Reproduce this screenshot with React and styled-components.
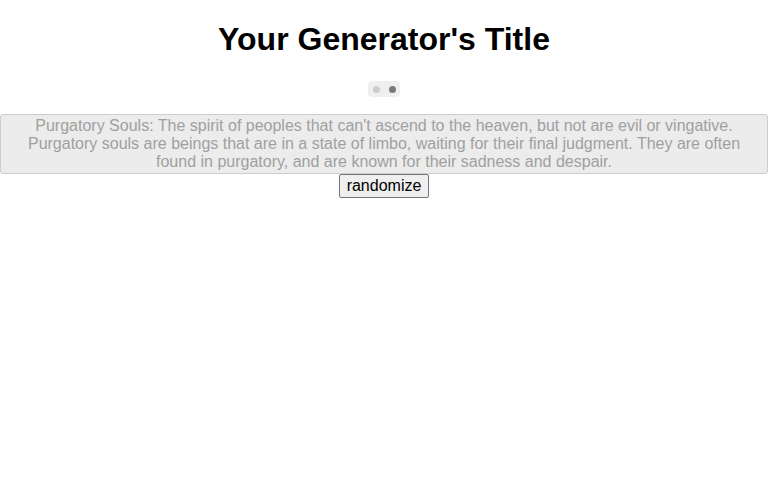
import React, { useState } from 'react';
import styled, { createGlobalStyle } from 'styled-components';

const descriptions = [
  "Purgatory Souls: The spirit of peoples that can't ascend to the heaven, but not are evil or vingative. Purgatory souls are beings that are in a state of limbo, waiting for their final judgment. They are often found in purgatory, and are known for their sadness and despair.",
];

function App() {
  const [index, setIndex] = useState(0);

  return (
    <Page>
      <GlobalStyle />
      <Title>Your Generator's Title</Title>
      <LoaderRow>
        <Loader>
          <Dot />
          <Dot $active />
        </Loader>
      </LoaderRow>
      <Output>{descriptions[index]}</Output>
      <ButtonRow>
        <RandomButton onClick={() => setIndex((index + 1) % descriptions.length)}>
          randomize
        </RandomButton>
      </ButtonRow>
    </Page>
  );
}

export default App;

const GlobalStyle = createGlobalStyle`
  body {
    margin: 0;
    background: #fff;
    font-family: "Liberation Sans", Arial, sans-serif;
  }
`;

const Page = styled.div`
  text-align: center;
`;

const Title = styled.h1`
  font-size: 32px;
  font-weight: 700;
  margin: 21px 0 23px;
  line-height: 37px;
  color: #000;
`;

const LoaderRow = styled.div`
  display: flex;
  justify-content: center;
  margin-bottom: 17px;
`;

const Loader = styled.div`
  display: flex;
  align-items: center;
  justify-content: center;
  gap: 9px;
  width: 32px;
  height: 16px;
  background: #efefef;
  border-radius: 4px;
`;

const Dot = styled.span`
  width: 7px;
  height: 7px;
  border-radius: 50%;
  background: ${(p) => (p.$active ? '#7a7a7a' : '#cccccc')};
`;

const Output = styled.div`
  box-sizing: border-box;
  width: 100%;
  padding: 2px 20px;
  background: #ececec;
  border: 1px solid #cdcdcd;
  border-radius: 3px;
  color: #a0a0a0;
  font-size: 16px;
  line-height: 18px;
`;

const ButtonRow = styled.div`
  display: flex;
  justify-content: center;
`;

const RandomButton = styled.button`
  font-family: "Liberation Sans", Arial, sans-serif;
  font-size: 16px;
  line-height: 18px;
  padding: 2px 7px;
  height: 24px;
  color: #000;
  background: #efefef;
  border: 1px solid #767676;
  border-radius: 2px;
`;
